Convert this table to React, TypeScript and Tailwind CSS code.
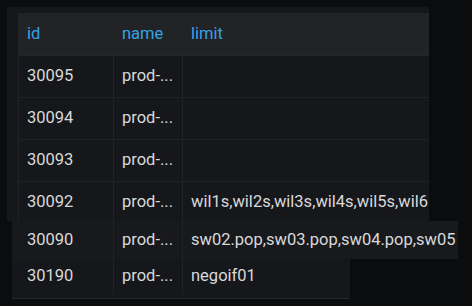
const idCol = "w-[95px] shrink-0 border-r border-[#202226] pl-2";
const nameCol = "w-[69px] shrink-0 border-r border-[#202226] pl-2";

function Row({ id, limit }: { id: string; limit?: string }) {
  return (
    <div className="flex h-[42px] items-center border-b border-[#202226]">
      <div className={idCol + " flex h-full items-center"}>{id}</div>
      <div className={nameCol + " flex h-full items-center"}>prod-...</div>
      <div className="flex h-full items-center whitespace-nowrap pl-2">{limit}</div>
    </div>
  );
}

export default function App() {
  return (
    <div
      className="h-[306px] w-[472px] overflow-hidden bg-[#0b0c0e] text-[16.5px] text-[#d8d9da]"
      style={{ fontFamily: "Roboto, 'Liberation Sans', sans-serif" }}
    >
      <div className="ml-[7px] mt-[7px] h-[214px] w-[422px] overflow-hidden bg-[#16171b] pl-[11px] pt-[6px]">
        <div className="h-full overflow-hidden border-l border-[#202226]">
          <div className="flex h-[43px] items-center border-b border-[#26272b] bg-[#222327] text-[#33a2e5]">
            <div className={idCol + " flex h-full items-center"}>id</div>
            <div className={nameCol + " flex h-full items-center"}>name</div>
            <div className="pl-2">limit</div>
          </div>
          <Row id="30095" />
          <Row id="30094" />
          <Row id="30093" />
          <Row id="30092" limit="wil1s,wil2s,wil3s,wil4s,wil5s,wil6" />
        </div>
      </div>
      <div className="ml-[12px] h-[38px] w-[446px] overflow-hidden bg-[#18191d] pl-[7px]">
        <div className="flex h-full items-center">
          <div className={idCol + " flex h-full items-center"}>30090</div>
          <div className={nameCol + " flex h-full items-center"}>prod-...</div>
          <div className="whitespace-nowrap pl-2">sw02.pop,sw03.pop,sw04.pop,sw05</div>
        </div>
      </div>
      <div className="ml-[12px] h-[40px] w-[338px] overflow-hidden border-b border-[#26272b] bg-[#16171b] pb-[4px] pl-[7px]">
        <div className="flex h-full items-center">
          <div className={idCol + " flex h-full items-center"}>30190</div>
          <div className={nameCol + " flex h-full items-center"}>prod-...</div>
          <div className="whitespace-nowrap pl-2">negoif01</div>
        </div>
      </div>
    </div>
  );
}
